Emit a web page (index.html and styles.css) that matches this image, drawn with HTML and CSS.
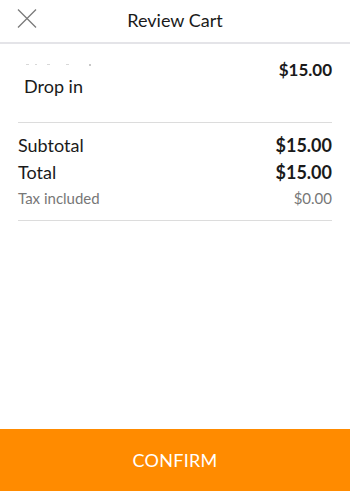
FILE: index.html
```html
<!DOCTYPE html>
<html>
<head>
<meta charset="utf-8">
<link rel="stylesheet" href="styles.css">
</head>
<body>
<div class="app">
  <header class="header">
    <button class="close" aria-label="Close">
      <svg width="20" height="19" viewBox="0 0 20 19"><path d="M1 0.5 L19 18.5 M19 0.5 L1 18.5" stroke="#7a7a7a" stroke-width="1.3" fill="none"/></svg>
    </button>
    <h1 class="title">Review Cart</h1>
  </header>
  <main class="content">
    <section class="item">
      <div class="item-info">
        <div class="item-clip">
          <i class="mark m1"></i><i class="mark m2"></i><i class="mark m3"></i><i class="mark m4"></i><i class="mark m5"></i>
        </div>
        <div class="item-name">Drop in</div>
      </div>
      <div class="item-price">$15.00</div>
    </section>
    <section class="summary">
      <div class="row"><span>Subtotal</span><span class="amount">$15.00</span></div>
      <div class="row"><span>Total</span><span class="amount">$15.00</span></div>
      <div class="row row-tax"><span>Tax included</span><span>$0.00</span></div>
    </section>
  </main>
  <button class="confirm">CONFIRM</button>
</div>
</body>
</html>
```
FILE: styles.css
```css
* { box-sizing: border-box; }
html, body { margin: 0; padding: 0; }
body {
  font-family: Lato, "Open Sans", sans-serif;
  color: #1a1a1a;
  background: #fff;
}
.app {
  width: 350px;
  height: 491px;
  display: flex;
  flex-direction: column;
}
.header {
  height: 44px;
  flex: none;
  border-bottom: 2px solid #e4e4e8;
  display: flex;
  align-items: center;
  justify-content: center;
  position: relative;
}
.close {
  position: absolute;
  left: 17px;
  top: 9px;
  padding: 0;
  border: 0;
  background: none;
  line-height: 0;
}
.title {
  margin: 0;
  margin-top: -2px;
  font-size: 18px;
  font-weight: 400;
  color: #1a1a1a;
}
.content {
  flex: 1;
  padding: 0 18px;
}
.item {
  display: flex;
  justify-content: space-between;
  align-items: flex-start;
  padding: 16px 0 25px;
  border-bottom: 1px solid #dcdcdc;
}
.item-info { padding-left: 6px; }
.item-clip {
  height: 2px;
  margin-top: 4px;
  display: flex;
  align-items: flex-start;
}
.mark {
  display: block;
  height: 1px;
  background: #d8d8d8;
}
.m1 { width: 3px; margin-left: 2px; }
.m2 { width: 2px; margin-left: 6px; }
.m3 { width: 3px; margin-left: 10px; }
.m4 { width: 3px; margin-left: 16px; }
.m5 { width: 2px; margin-left: 20px; height: 2px; background: #c8c8c8; }
.item-name {
  font-size: 18px;
  line-height: 22px;
  margin-top: 9px;
}
.item-price {
  font-size: 17px;
  font-weight: 700;
  line-height: 20px;
}
.summary {
  padding: 9px 0 10px;
  border-bottom: 1px solid #dcdcdc;
}
.row {
  display: flex;
  justify-content: space-between;
  font-size: 18px;
  line-height: 27px;
}
.amount { font-weight: 700; }
.row-tax {
  font-size: 15px;
  line-height: 24px;
  color: #777;
}
.confirm {
  flex: none;
  height: 62px;
  border: 0;
  margin: 0;
  width: 100%;
  background: #ff8b00;
  color: #fff;
  font-family: Lato, sans-serif;
  font-size: 18px;
  letter-spacing: 0.3px;
}
```
